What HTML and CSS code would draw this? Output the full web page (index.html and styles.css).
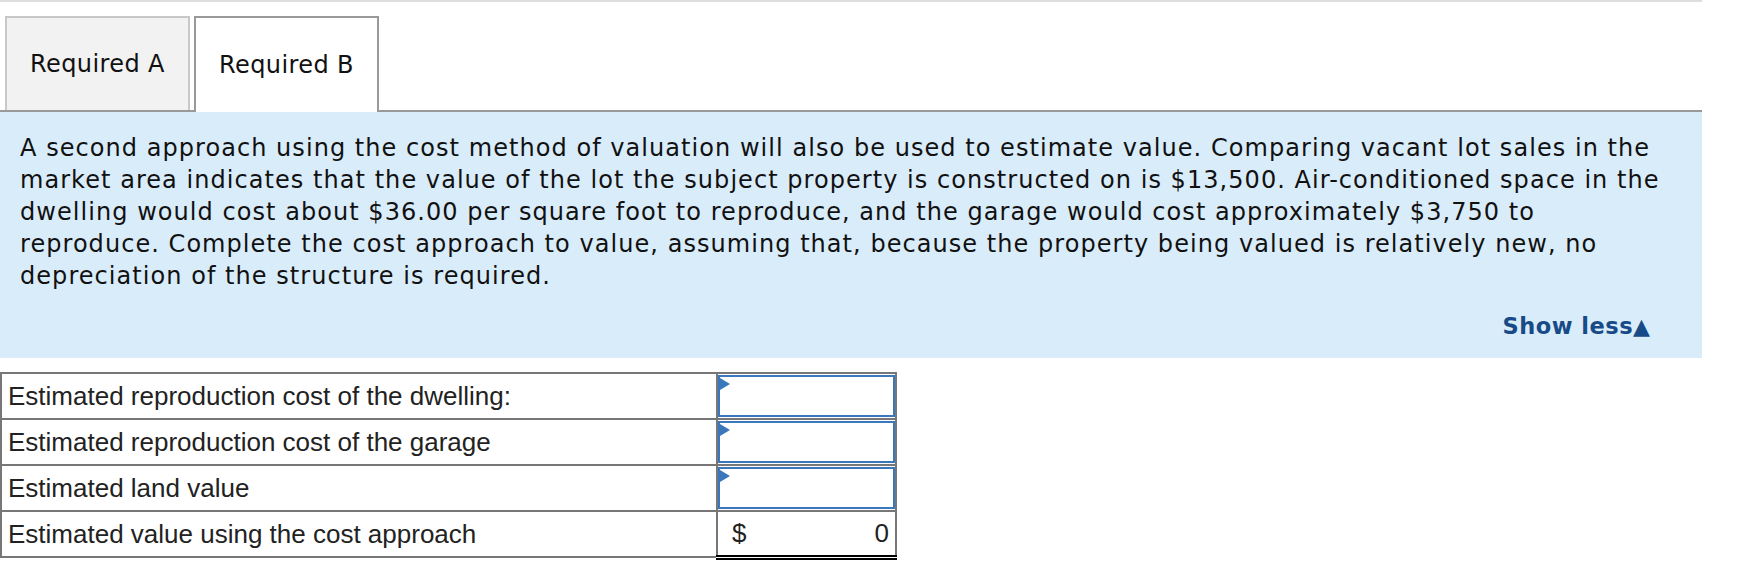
FILE: index.html
```html
<!DOCTYPE html>
<html lang="en">
<head>
    <meta charset="UTF-8">
    <title>Required B</title>
    <link rel="stylesheet" href="styles.css">
</head>
<body>
    <div class="top-rule"></div>

    <div class="tabs">
        <button class="tab">Required A</button>
        <button class="tab active">Required B</button>
    </div>

    <div class="question">
        <p class="question-text">A second approach using the cost method of valuation will also be used to estimate value. Comparing vacant lot sales in the market area indicates that the value of the lot the subject property is constructed on is $13,500. Air-conditioned space in the dwelling would cost about $36.00 per square foot to reproduce, and the garage would cost approximately $3,750 to reproduce. Complete the cost approach to value, assuming that, because the property being valued is relatively new, no depreciation of the structure is required.</p>
        <div class="show-less">Show less<span class="arrow">&#9650;</span></div>
    </div>

    <table class="answer-table">
        <tr>
            <td class="label">Estimated reproduction cost of the dwelling:</td>
            <td class="entry"><div class="input-box"><span class="flag"></span></div></td>
        </tr>
        <tr>
            <td class="label">Estimated reproduction cost of the garage</td>
            <td class="entry"><div class="input-box"><span class="flag"></span></div></td>
        </tr>
        <tr>
            <td class="label">Estimated land value</td>
            <td class="entry"><div class="input-box"><span class="flag"></span></div></td>
        </tr>
        <tr>
            <td class="label">Estimated value using the cost approach</td>
            <td class="total"><div class="total-value"><span>$</span><span>0</span></div></td>
        </tr>
    </table>
</body>
</html>
```

FILE: styles.css
```css
* {
    margin: 0;
    padding: 0;
    box-sizing: border-box;
}

body {
    font-family: Verdana, 'DejaVu Sans', sans-serif;
    color: #111;
    background: #fff;
}

.top-rule {
    width: 1702px;
    height: 2px;
    background: #dedede;
}

.tabs {
    width: 1702px;
    display: flex;
    align-items: flex-end;
    gap: 4px;
    padding: 14px 0 0 5px;
    border-bottom: 2px solid #999;
}

.tab {
    width: 185px;
    height: 94px;
    font-family: Verdana, 'DejaVu Sans', sans-serif;
    font-size: 24px;
    letter-spacing: 0.4px;
    color: #111;
    background: #f2f2f2;
    border: 2px solid #c8c8c8;
    border-bottom: none;
    cursor: pointer;
}

.tab.active {
    height: 96px;
    margin-bottom: -2px;
    background: #fff;
    border-color: #999;
}

.question {
    width: 1702px;
    background: #d9ecfa;
    padding: 20px 34px 15px 20px;
}

.question-text {
    font-size: 24px;
    letter-spacing: 1.05px;
    line-height: 32px;
}

.show-less {
    text-align: right;
    margin-right: 18px;
    margin-top: 18px;
    font-size: 22.5px;
    letter-spacing: 0.5px;
    line-height: 32px;
    font-weight: bold;
    color: #174a87;
}

.arrow {
    font-size: 22px;
    letter-spacing: 0;
}

.answer-table {
    margin-top: 14px;
    width: 897px;
    border-collapse: collapse;
    font-family: 'Liberation Sans', Arial, sans-serif;
    font-size: 26px;
    color: #222;
}

.answer-table td {
    height: 46px;
    border: 2px solid #777;
}

.label {
    width: 716px;
    padding: 0 0 0 6px;
}

.entry {
    padding: 1px 0;
}

.input-box {
    position: relative;
    height: 42px;
    border: 2px solid #3a77bb;
}

.flag {
    position: absolute;
    top: 1px;
    left: 0;
    width: 0;
    height: 0;
    border-top: 6px solid transparent;
    border-bottom: 6px solid transparent;
    border-left: 10px solid #3a77bb;
}

.answer-table td.total {
    padding: 0 6px 0 14px;
    border-top: 2px solid #000;
    border-bottom: 5px double #000;
}

.total-value {
    display: flex;
    justify-content: space-between;
}
```
